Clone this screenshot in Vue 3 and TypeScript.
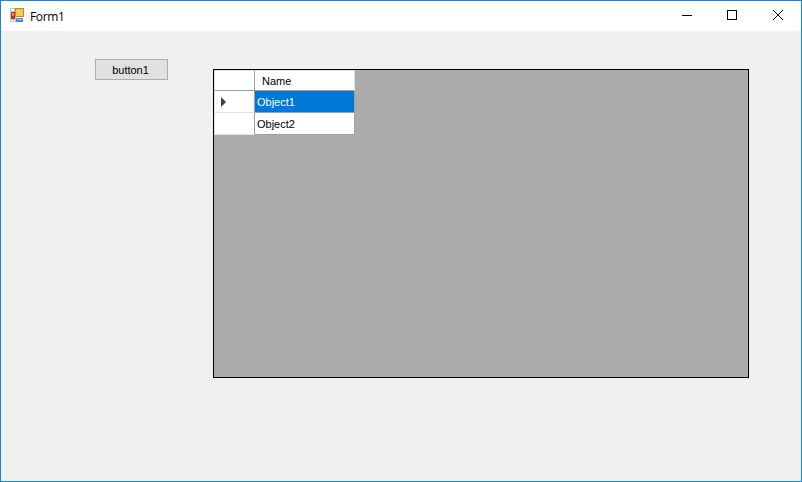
<script setup lang="ts">
interface Row {
  name: string
  selected: boolean
}
const rows: Row[] = [
  { name: 'Object1', selected: true },
  { name: 'Object2', selected: false },
]
</script>

<template>
  <div class="window">
    <header class="titlebar">
      <svg class="app-icon" width="14" height="14" viewBox="0 0 14 14">
        <rect x="0" y="0" width="14" height="14" fill="#c4c4c4" />
        <rect x="1" y="1" width="3" height="2" fill="#fff" />
        <rect x="1" y="12" width="2" height="1" fill="#fff" />
        <rect x="4" y="12" width="1" height="1" fill="#fff" />
        <rect x="1" y="4" width="4" height="7" fill="#b8322a" />
        <rect x="2" y="5" width="2" height="3" fill="#e98a70" />
        <rect x="5" y="0" width="9" height="9" fill="#b98a2a" />
        <rect x="6" y="1" width="7" height="7" fill="#f7c94f" />
        <rect x="6" y="9" width="8" height="5" fill="#fff" />
        <rect x="6" y="10" width="7" height="4" fill="#4f86d8" />
        <rect x="7" y="11" width="5" height="1" fill="#a9c8f2" />
      </svg>
      <span class="title">Form1</span>
      <div class="controls">
        <svg class="ctl" width="46" height="30" viewBox="0 0 46 30">
          <path d="M19 14.5H29" stroke="#000" fill="none" />
        </svg>
        <svg class="ctl" width="46" height="30" viewBox="0 0 46 30">
          <rect x="18.5" y="9.5" width="9" height="9" stroke="#000" fill="none" />
        </svg>
        <svg class="ctl" width="46" height="30" viewBox="0 0 46 30">
          <path d="M18 9L28 19M28 9L18 19" stroke="#000" fill="none" />
        </svg>
      </div>
    </header>
    <main class="client">
      <button class="btn" type="button">button1</button>
      <section class="grid">
        <table class="table">
          <thead>
            <tr>
              <th class="head-corner"></th>
              <th class="head-name">Name</th>
            </tr>
          </thead>
          <tbody>
            <tr v-for="row in rows" :key="row.name">
              <td class="row-head">
                <span v-if="row.selected" class="arrow"></span>
              </td>
              <td class="cell" :class="{ selected: row.selected }">{{ row.name }}</td>
            </tr>
          </tbody>
        </table>
      </section>
    </main>
  </div>
</template>

<style>
html,
body {
  margin: 0;
  padding: 0;
  overflow: hidden;
}
</style>

<style scoped>
.window {
  box-sizing: border-box;
  width: 802px;
  height: 482px;
  border: 1px solid #1883d7;
  display: flex;
  flex-direction: column;
  background: #f0f0f0;
  font-family: "Liberation Sans", Arial, sans-serif;
  color: #000;
}
.titlebar {
  height: 30px;
  flex: none;
  background: #fff;
  display: flex;
  align-items: center;
  padding-left: 9px;
}
.app-icon {
  flex: none;
  margin-bottom: 2px;
}
.title {
  margin-left: 6px;
  font-family: "Open Sans", "Noto Sans", sans-serif;
  font-size: 12px;
  letter-spacing: -0.35px;
}
.controls {
  margin-left: auto;
  display: flex;
}
.ctl {
  display: block;
}
.client {
  flex: 1;
  display: flex;
  align-items: flex-start;
  padding: 28px 0 0 94px;
}
.btn {
  box-sizing: border-box;
  width: 73px;
  height: 21px;
  padding: 1px 2px 0 0;
  background: #e1e1e1;
  border: 1px solid #adadad;
  border-radius: 0;
  font-family: "Liberation Sans", Arial, sans-serif;
  font-size: 11px;
  color: #000;
  flex: none;
}
.grid {
  box-sizing: border-box;
  width: 536px;
  height: 309px;
  margin: 10px 0 0 45px;
  border: 1px solid #000;
  background: #ababab;
  flex: none;
}
.table {
  border-collapse: separate;
  border-spacing: 0;
  table-layout: fixed;
  width: 141px;
  font-size: 11px;
}
.head-corner,
.head-name {
  box-sizing: border-box;
  height: 21px;
  padding: 0;
  background: #fff;
  font-weight: normal;
  border-top: 1px solid #e0e0e0;
  border-bottom: 1px solid #a0a0a0;
}
.head-corner {
  width: 41px;
  border-left: 1px solid #e0e0e0;
  border-right: 1px solid #a0a0a0;
}
.head-name {
  width: 100px;
  text-align: left;
  padding-left: 7px;
  border-right: 1px solid #e0e0e0;
}
.row-head {
  box-sizing: border-box;
  height: 22px;
  padding: 0;
  background: #fff;
  border-left: 1px solid #e0e0e0;
  border-right: 1px solid #a0a0a0;
  border-bottom: 1px solid #e0e0e0;
}
.arrow {
  display: block;
  width: 0;
  height: 0;
  margin: 1px 0 0 6px;
  border-left: 5px solid #404040;
  border-top: 5px solid transparent;
  border-bottom: 5px solid transparent;
}
.cell {
  box-sizing: border-box;
  height: 22px;
  padding: 0 0 0 2px;
  background: #fff;
  border-right: 1px solid #a0a0a0;
  border-bottom: 1px solid #a0a0a0;
}
.cell.selected {
  background: #0078d7;
  color: #fff;
}
</style>
